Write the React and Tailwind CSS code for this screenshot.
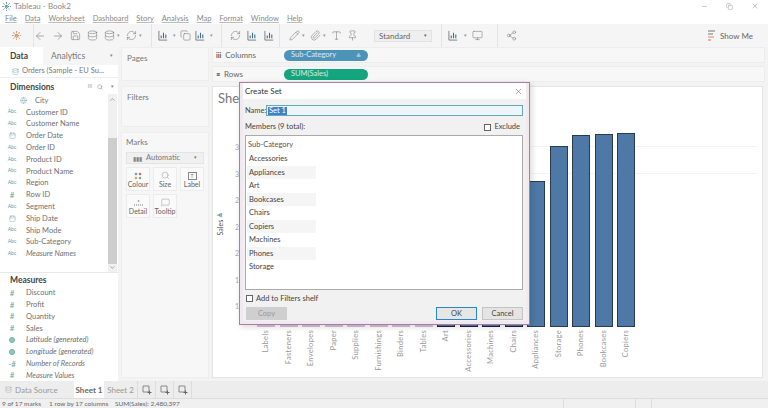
import { ArrowLeft, ArrowRight, Calendar, ChevronDown, ChevronUp, Copy, Database, Globe, Minus, MessageSquare, Monitor, Pencil, Paperclip, Pin, RefreshCw, Save, Search, Share2, Type, X } from 'lucide-react';

const menuItems = ['File', 'Data', 'Worksheet', 'Dashboard', 'Story', 'Analysis', 'Map', 'Format', 'Window', 'Help'];

const dimensions = [
  { type: 'abc', name: 'Customer ID' },
  { type: 'abc', name: 'Customer Name' },
  { type: 'date', name: 'Order Date' },
  { type: 'abc', name: 'Order ID' },
  { type: 'abc', name: 'Product ID' },
  { type: 'abc', name: 'Product Name' },
  { type: 'abc', name: 'Region' },
  { type: 'num', name: 'Row ID' },
  { type: 'abc', name: 'Segment' },
  { type: 'date', name: 'Ship Date' },
  { type: 'abc', name: 'Ship Mode' },
  { type: 'abc', name: 'Sub-Category' },
  { type: 'abc', name: 'Measure Names', italic: true },
];

const measures = [
  { type: 'num', name: 'Discount' },
  { type: 'num', name: 'Profit' },
  { type: 'num', name: 'Quantity' },
  { type: 'num', name: 'Sales' },
  { type: 'geo', name: 'Latitude (generated)', italic: true },
  { type: 'geo', name: 'Longitude (generated)', italic: true },
  { type: 'count', name: 'Number of Records', italic: true },
  { type: 'num', name: 'Measure Values', italic: true },
];

const bars = [
  { name: 'Labels', height: 4 },
  { name: 'Fasteners', height: 4 },
  { name: 'Envelopes', height: 4 },
  { name: 'Paper', height: 4 },
  { name: 'Supplies', height: 4 },
  { name: 'Furnishings', height: 4 },
  { name: 'Binders', height: 4 },
  { name: 'Tables', height: 4 },
  { name: 'Art', height: 30, dark: true },
  { name: 'Accessories', height: 60, dark: true },
  { name: 'Machines', height: 70, dark: true },
  { name: 'Chairs', height: 100, dark: true },
  { name: 'Appliances', height: 146 },
  { name: 'Storage', height: 181 },
  { name: 'Phones', height: 192 },
  { name: 'Bookcases', height: 193 },
  { name: 'Copiers', height: 194 },
];

const members = ['Accessories', 'Appliances', 'Art', 'Bookcases', 'Chairs', 'Copiers', 'Machines', 'Phones', 'Storage'];

const FieldIcon = ({ type }) => {
  if (type === 'abc') return <span className="text-[5px] text-[#5f9aaa]">Abc</span>;
  if (type === 'num') return <span className="text-[8px] leading-none text-[#5fa8a0]">#</span>;
  if (type === 'count') return <span className="text-[8px] leading-none text-[#5fa8a0]">-#</span>;
  if (type === 'date') return <Calendar size={7} strokeWidth={1.2} className="text-[#5f8f9f]" />;
  return <span className="w-[6px] h-[6px] rounded-full bg-[#8fc8b4] border border-[#6fb0a0]"></span>;
};

const FieldRow = ({ field }) => (
  <div className="h-[11.8px] flex items-center">
    <span className="w-[26px] flex justify-center pr-[2px]">
      <FieldIcon type={field.type} />
    </span>
    <span className={`text-[7.5px] text-[#707070] whitespace-nowrap ${field.italic ? 'italic' : ''}`}>{field.name}</span>
  </div>
);

const ToolIcon = ({ icon: Icon, size = 11, caret }) => (
  <span className="flex items-center gap-[2px] text-[#777]">
    <Icon size={size} strokeWidth={1.2} />
    {caret && <span className="text-[5px] text-[#999]">▾</span>}
  </span>
);

const Bars = ({ extra }) => (
  <svg width="11" height="11" viewBox="0 0 12 12" className="text-[#777]">
    <path d="M1 1v10h9" fill="none" stroke="currentColor" />
    <path d="M3.5 9V6M6 9V3M8.5 9V5" stroke="#3f6f8f" strokeWidth="1.2" />
    {extra}
  </svg>
);

// sheet tab buttons: a small frame with a plus at its lower right corner
const NewTabIcon = () => (
  <svg width="10" height="10" viewBox="0 0 10 10" className="text-[#888]">
    <path d="M1 1h6v6H1z" fill="none" stroke="currentColor" />
    <path d="M7.5 5.5v4M5.5 7.5h4" stroke="#666" />
  </svg>
);

const Toolbar = () => (
  <div className="h-[23px] bg-[#f5f5f5] flex items-center">
    <div className="w-[34px] flex justify-center border-r border-[#e4e4e4] h-full items-center">
      <svg width="11" height="11" viewBox="0 0 12 12">
        <path d="M6 1v10M1 6h10M2.5 2.5l7 7M9.5 2.5l-7 7" stroke="#d29a6a" strokeWidth="1.2" strokeDasharray="2 1" />
      </svg>
    </div>
    <div className="w-[118px] flex items-center gap-[6px] pl-[0px] border-r border-[#e4e4e4] h-full">
      <ToolIcon icon={ArrowLeft} size={12} />
      <ToolIcon icon={ArrowRight} size={12} />
      <ToolIcon icon={Save} />
      <ToolIcon icon={Database} />
      <ToolIcon icon={Database} caret />
      <ToolIcon icon={RefreshCw} caret />
    </div>
    <div className="w-[70px] flex items-center gap-[4px] pl-[6px] border-r border-[#e4e4e4] h-full">
      <Bars />
      <span className="text-[5px] text-[#999]">▾</span>
      <ToolIcon icon={Copy} />
      <Bars />
      <span className="text-[5px] text-[#999]">▾</span>
    </div>
    <div className="w-[58px] flex items-center gap-[6px] pl-[8px] border-r border-[#e4e4e4] h-full">
      <ToolIcon icon={RefreshCw} />
      <Bars />
      <Bars />
    </div>
    <div className="w-[94px] flex items-center gap-[5px] pl-[9px] h-full">
      <ToolIcon icon={Pencil} caret />
      <ToolIcon icon={Paperclip} caret />
      <ToolIcon icon={Type} />
      <ToolIcon icon={Pin} />
    </div>
    <div className="w-[58px] h-[12px] bg-[#efefef] border border-[#e2e2e2] flex items-center justify-between px-[4px] text-[8px] text-[#666]">
      <span>Standard</span>
      <span className="text-[5px]">▾</span>
    </div>
    <div className="w-[57px] ml-[9px] flex items-center gap-[5px] pl-[6px] border-x border-[#e4e4e4] h-full">
      <Bars />
      <span className="text-[5px] text-[#999]">▾</span>
      <ToolIcon icon={Monitor} />
    </div>
    <div className="pl-[8px]">
      <ToolIcon icon={Share2} />
    </div>
    <div className="ml-auto mr-[15px] flex items-center gap-[4px] text-[8px] text-[#666]">
      <svg width="8" height="11" viewBox="0 0 8 11">
        <path d="M0 1h7M0 4h5" stroke="#777" />
        <path d="M0 7h6" stroke="#e08a5a" />
        <path d="M0 10h3" stroke="#d66" />
      </svg>
      <span>Show Me</span>
    </div>
  </div>
);

const DataPanel = () => (
  <div className="w-[118px] bg-white flex flex-col shrink-0">
    <div className="h-[18px] flex text-[8.5px] items-center bg-[#f5f5f5] shrink-0">
      <div className="w-[43px] h-full bg-white flex items-center pl-[10px] font-bold text-[#444]">Data</div>
      <div className="flex-1 pl-[8px] text-[#777]">Analytics</div>
      <span className="pr-[5px] text-[5px] text-[#888]">▾</span>
    </div>
    <div className="h-[12px] flex items-center pl-[12px] gap-[3px] text-[7.5px] text-[#777] shrink-0">
      <Database size={7} strokeWidth={1.2} className="text-[#4f8f9f]" />
      <span>Orders (Sample - EU Su...</span>
    </div>
    <div className="h-[17px] flex items-center pl-[10px] pt-[2px] border-t border-[#eee] text-[8.5px] font-bold text-[#444] shrink-0">
      <span className="flex-1">Dimensions</span>
      <span className="text-[5px] font-normal text-[#999]">III</span>
      <Search size={6} className="text-[#888] ml-[5px] mr-[8px]" />
      <span className="text-[5px] font-normal text-[#888] pr-[4px]">▾</span>
    </div>
    <div className="h-[178px] flex shrink-0">
      <div className="flex-1 overflow-hidden pt-[0.5px]">
        <div className="h-[11.8px] flex items-center pl-[20px] gap-[8px]">
          <Globe size={7} strokeWidth={1.2} className="text-[#4f8f9f]" />
          <span className="text-[7.5px] text-[#707070]">City</span>
        </div>
        {dimensions.map((field) => (
          <FieldRow key={field.name} field={field} />
        ))}
      </div>
      <div className="w-[9px] mr-[1px] bg-[#f0f0f0] flex flex-col">
        <div className="h-[44px] flex justify-center pt-[2px]">
          <ChevronUp size={7} className="text-[#777]" />
        </div>
        <div className="flex-1 bg-[#cdcdcd]"></div>
        <div className="h-[8px] flex justify-center">
          <ChevronDown size={7} className="text-[#777]" />
        </div>
      </div>
    </div>
    <div className="border-t border-[#e8e8e8] pl-[10px] h-[15px] flex items-center text-[8.5px] font-bold text-[#444] shrink-0">Measures</div>
    <div>
      {measures.map((field) => (
        <FieldRow key={field.name} field={field} />
      ))}
    </div>
  </div>
);

const MarkButton = ({ label, children }) => (
  <div className="w-[24px] h-[24px] border border-[#ececec] bg-[#fafafa] flex flex-col items-center justify-between py-[2px]">
    <span className="h-[11px] flex items-center justify-center text-[#777]">{children}</span>
    <span className="text-[7px] leading-none text-[#666]">{label}</span>
  </div>
);

const MiddlePanel = () => (
  <div className="w-[94px] flex flex-col px-[3px] gap-[5px] pb-[3px]">
    <div className="h-[34px] bg-[#f7f7f7] border border-[#eee] pl-[5px] pt-[4px] text-[8px] text-[#777]">Pages</div>
    <div className="h-[41px] bg-[#f7f7f7] border border-[#eee] pl-[5px] pt-[4px] text-[8px] text-[#777]">Filters</div>
    <div className="flex-1 bg-[#f7f7f7] border border-[#eee] px-[4px] pt-[4px] text-[8px] text-[#777] flex flex-col">
      <span className="leading-[10px]">Marks</span>
      <div className="mt-[5px] h-[12px] bg-[#f0f0f0] border border-[#e4e4e4] flex items-center px-[6px] gap-[4px] text-[7.5px]">
        <span className="text-[#888] text-[6px]">▮▮▮</span>
        <span className="flex-1">Automatic</span>
        <span className="text-[5px]">▾</span>
      </div>
      <div className="mt-[3px] grid grid-cols-3 gap-x-[3px] gap-y-[3px]">
        <MarkButton label="Colour">
          <svg width="8" height="8" viewBox="0 0 8 8">
            <circle cx="2" cy="2" r="1.3" fill="#6f9fc0" />
            <circle cx="6" cy="2" r="1.3" fill="#d06a6a" />
            <circle cx="2" cy="6" r="1.3" fill="#e0a060" />
            <circle cx="6" cy="6" r="1.3" fill="#70b0a0" />
          </svg>
        </MarkButton>
        <MarkButton label="Size">
          <Search size={9} strokeWidth={1} />
        </MarkButton>
        <MarkButton label="Label">
          <span className="w-[9px] h-[8px] border border-[#888] text-[5px] leading-[6px] text-center">T</span>
        </MarkButton>
        <MarkButton label="Detail">
          <svg width="9" height="8" viewBox="0 0 9 8">
            <circle cx="4.5" cy="2" r="0.8" fill="#777" />
            <path d="M0 6h9" stroke="#777" strokeDasharray="1 1" />
          </svg>
        </MarkButton>
        <MarkButton label="Tooltip">
          <MessageSquare size={9} strokeWidth={1} />
        </MarkButton>
      </div>
    </div>
  </div>
);

const Shelf = ({ icon, label, pill, pillClass, arrow }) => (
  <div className="h-[16px] bg-[#f7f7f7] border border-[#ededed] flex items-center">
    <span className="w-[71px] pl-[3px] text-[8px] text-[#666] flex items-center gap-[4px]">
      <span className="text-[7px] text-[#555] font-bold leading-none">{icon}</span>
      {label}
    </span>
    <span className={`w-[84px] h-[11px] rounded-full flex items-center justify-between pl-[7px] pr-[7px] text-[7.5px] text-white/80 ${pillClass}`}>
      {pill}
      {arrow && <span className="text-[6px]">≜</span>}
    </span>
  </div>
);

const Chart = () => (
  <div className="relative flex-1 mr-[5px] mt-[1px] bg-white border border-[#e4e4e4] flex flex-col overflow-hidden">
    <div className="h-0 pl-[5px] pt-[4px] text-[13px] leading-[14px] text-[#777]">Sheet 1</div>
    <div className="flex-1 flex items-end relative">
      <div className="absolute left-[44px] right-[5px] top-[55px] border-t border-[#f3f3f3]"></div>
      <div className="absolute left-[44px] right-[5px] top-[82px] border-t border-[#f3f3f3]"></div>
      <div className="w-[14px] self-stretch flex items-start pt-[121px] justify-center">
        <span className="[writing-mode:vertical-rl] rotate-180 text-[7px] text-[#555]">Sales ≜</span>
      </div>
      <div className="w-[30px] self-stretch flex flex-col pt-[43px] pl-[8px] text-[7px] text-[#aaa] leading-[26.5px]">
        <span>3</span>
        <span>3</span>
        <span>2</span>
        <span>2</span>
        <span>2</span>
        <span>1</span>
        <span>1</span>
      </div>
      <div className="relative flex items-end gap-[4.5px]">
        {bars.map((bar) => (
          <div
            key={bar.name}
            className={`w-[18px] ${bar.height > 140 ? 'bg-[#4e79a7] border border-[#2b3a4a]' : bar.dark ? 'bg-[#4e79a7] border border-[#1f1f3a]' : 'bg-[#d3c3d6]'}`}
            style={{ height: bar.height }}
          ></div>
        ))}
      </div>
    </div>
    <div className="h-[50px] flex pl-[44px] gap-[4.5px]">
      {bars.map((bar) => (
        <div key={bar.name} className="w-[18px] flex justify-center pt-[3px]">
          <span className="[writing-mode:vertical-rl] rotate-180 h-fit text-[7.5px] tracking-[0.3px] text-[#999] whitespace-nowrap">{bar.name}</span>
        </div>
      ))}
    </div>
  </div>
);

const CreateSetDialog = () => (
  <div className="absolute left-[239px] top-[82px] w-[291px] h-[243px] bg-[#f1e8f0] border border-[#a87fa3] px-[3px] pb-[3px] shadow-[2px_2px_6px_rgba(0,0,0,0.15)] flex flex-col">
    <div className="h-[16px] bg-white flex items-center justify-between pl-[2px] pr-[3px] text-[8px] text-[#333] shrink-0">
      <span>Create Set</span>
      <X size={9} strokeWidth={1.2} className="text-[#444]" />
    </div>
    <div className="flex-1 bg-[#f1f1f1] pl-[2px] pr-[3px] flex flex-col text-[7.5px] text-[#444]">
      <div className="flex items-center mt-[6px] h-[11px]">
        <span className="w-[21px]">Name:</span>
        <div className="flex-1 h-[11px] bg-[#eaf6fa] border border-[#6aa5b8] flex items-center pl-[1px]">
          <span className="bg-[#3a84c8] text-white leading-[8px] px-[1px]">Set 1</span>
        </div>
      </div>
      <div className="flex items-center justify-between mt-[6px] h-[10px] pr-[3px]">
        <span>Members (9 total):</span>
        <span className="flex items-center gap-[3px]">
          <span className="w-[7px] h-[7px] bg-white border border-[#666]"></span>
          Exclude
        </span>
      </div>
      <div className="mt-[3px] h-[155px] bg-white border border-[#aaa] pl-[1px]">
        <div className="w-[69px] h-[15px] mt-[1px] flex items-center pl-[1px] text-[#555]">Sub-Category</div>
        <div className="w-[69px]">
          {members.map((name, idx) => (
            <div key={name} className={`h-[13.5px] flex items-center pl-[2px] ${idx % 2 === 1 ? 'bg-[#f5f5f5]' : 'bg-white'}`}>
              {name}
            </div>
          ))}
        </div>
      </div>
      <div className="flex items-center gap-[3px] mt-[4px] h-[9px] pl-[1px]">
        <span className="w-[7px] h-[7px] bg-white border border-[#666]"></span>
        Add to Filters shelf
      </div>
      <div className="flex mt-[4px] gap-[5px] pl-[1px]">
        <span className="w-[41px] h-[13px] bg-[#cfcfcf] flex items-center justify-center text-[#999] mr-auto">Copy</span>
        <span className="w-[41px] h-[13px] bg-[#e6e6e6] border border-[#2a86c8] flex items-center justify-center">OK</span>
        <span className="w-[41px] h-[13px] bg-[#e4e4e4] border border-[#c4c4c4] flex items-center justify-center">Cancel</span>
      </div>
    </div>
  </div>
);

const App = () => {
  return (
    <div className="relative w-[768px] h-[408px] overflow-hidden bg-white flex flex-col font-['Lato',sans-serif]">
      <div className="h-[12px] flex items-center pl-[2px] gap-[3px] text-[8px] text-[#888] relative">
        <svg width="9" height="9" viewBox="0 0 10 10">
          <path d="M5 0v10M0 5h10M1.5 1.5l7 7M8.5 1.5l-7 7" stroke="#4f8f9f" strokeWidth="1" strokeDasharray="2 1" />
        </svg>
        <span>Tableau - Book2</span>
        <div className="ml-auto flex items-center gap-[18px] pr-[9px] text-[#aaa]">
          <Minus size={7} />
          <Copy size={7} />
          <X size={8} />
        </div>
      </div>
      <div className="h-[12px] flex items-center pl-[5px] pt-[2px] gap-[8px] text-[7.5px] text-[#888]">
        {menuItems.map((item) => (
          <span key={item} className="underline decoration-[#bbb]">{item}</span>
        ))}
      </div>
      <Toolbar />
      <div className="h-[334px] bg-[#f3f3f3] flex">
        <DataPanel />
        <MiddlePanel />
        <div className="flex-1 flex flex-col gap-[3px] pb-[3px]">
          <div className="mr-[3px] flex flex-col gap-[3px]">
            <Shelf icon="iii" label="Columns" pill="Sub-Category" pillClass="bg-[#4b93b9]" arrow />
            <Shelf icon="≡" label="Rows" pill="SUM(Sales)" pillClass="bg-[#13a57e]" />
          </div>
          <Chart />
        </div>
      </div>
      <div className="h-[17px] bg-[#ededed] flex items-center text-[8px] text-[#999]">
        <span className="w-[74px] pl-[5px] flex items-center gap-[3px]">
          <Database size={7} strokeWidth={1.2} />
          Data Source
        </span>
        <span className="w-[30px] h-full bg-white flex items-center justify-center font-bold text-[#666]">Sheet 1</span>
        <span className="w-[34px] h-full flex items-center justify-center border-r border-[#ddd]">Sheet 2</span>
        <span className="w-[18px] h-full flex items-center justify-center border-r border-[#ddd]"><NewTabIcon /></span>
        <span className="w-[18px] h-full flex items-center justify-center border-r border-[#ddd]"><NewTabIcon /></span>
        <span className="w-[18px] h-full flex items-center justify-center border-r border-[#ddd]"><NewTabIcon /></span>
      </div>
      <div className="h-[10px] bg-[#f0f0f0] border-t border-[#ddd] flex items-center pl-[2px] text-[6.5px] text-[#666]">
        <span className="w-[47px]">9 of 17 marks</span>
        <span className="w-[66px]">1 row by 17 columns</span>
        <span className="w-[448px]">SUM(Sales): 2,480,397</span>
        <span className="h-full w-[72px] border-l border-[#ddd]"></span>
        <span className="h-full w-[16px] border-l border-[#ddd]"></span>
        <span className="h-full border-l border-[#ddd]"></span>
      </div>
      <CreateSetDialog />
    </div>
  );
};

export default App;
